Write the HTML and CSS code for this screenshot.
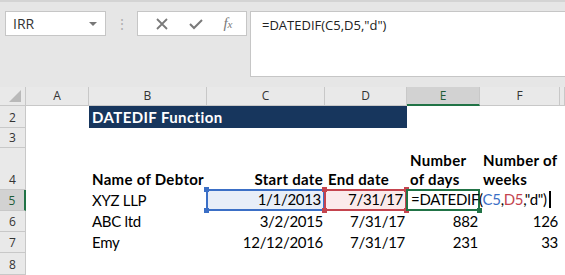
FILE: index.html
```html
<!DOCTYPE html>
<html lang="en">
<head>
  <meta charset="UTF-8" />
  <title>DATEDIF Function</title>
  <link rel="stylesheet" href="styles.css">
</head>
<body>
  <!-- formula bar -->
  <div class="toolbar">
    <div class="namebox">
      <span>IRR</span>
      <span class="caret"></span>
    </div>
    <div class="grip">⋮</div>
    <div class="fbtns">
      <svg width="14" height="14" viewBox="0 0 14 14"><path d="M2 2 L12 12 M12 2 L2 12" stroke="#7a7a7a" stroke-width="1.8" fill="none"/></svg>
      <svg width="16" height="14" viewBox="0 0 16 14"><path d="M2 7 L6 11 L14 3" stroke="#7a7a7a" stroke-width="2" fill="none"/></svg>
      <span class="fx">f<small>x</small></span>
    </div>
    <div class="finput">=DATEDIF(C5,D5,"d")</div>
  </div>

  <!-- sheet -->
  <div class="sheet">
    <div class="hd corner"><span class="tri"></span></div>
    <div class="hd">A</div>
    <div class="hd">B</div>
    <div class="hd">C</div>
    <div class="hd">D</div>
    <div class="hd sel-col">E</div>
    <div class="hd">F</div>
    <div class="hd"></div>

    <div class="rh">2</div>
    <div class="c"></div>
    <div class="c title">DATEDIF Function</div>
    <div class="c"></div>
    <div class="c"></div>
    <div class="c"></div>

    <div class="rh">3</div>
    <div class="c"></div><div class="c"></div><div class="c"></div><div class="c"></div><div class="c"></div><div class="c"></div><div class="c"></div>

    <div class="rh">4</div>
    <div class="c"></div>
    <div class="c b">Name of Debtor</div>
    <div class="c b r">Start date</div>
    <div class="c b">End date</div>
    <div class="c b wrap">Number<br>of days</div>
    <div class="c b wrap">Number of<br>weeks</div>
    <div class="c"></div>

    <div class="rh sel-row">5</div>
    <div class="c"></div>
    <div class="c">XYZ LLP</div>
    <div class="c r ref blue">1/1/2013<i class="h tl"></i><i class="h bl"></i><i class="h tr"></i><i class="h br"></i></div>
    <div class="c r ref red">7/31/17<i class="h tl"></i><i class="h bl"></i><i class="h tr"></i><i class="h br"></i></div>
    <div class="c ref green"><span class="edit">=DATEDIF(<em class="cb">C5</em>,<em class="cr">D5</em>,"d")<b class="cursor"></b></span><i class="h br"></i></div>
    <div class="c"></div>
    <div class="c"></div>

    <div class="rh">6</div>
    <div class="c"></div>
    <div class="c">ABC ltd</div>
    <div class="c r">3/2/2015</div>
    <div class="c r">7/31/17</div>
    <div class="c r">882</div>
    <div class="c r">126</div>
    <div class="c"></div>

    <div class="rh">7</div>
    <div class="c"></div>
    <div class="c">Emy</div>
    <div class="c r">12/12/2016</div>
    <div class="c r">7/31/17</div>
    <div class="c r">231</div>
    <div class="c r">33</div>
    <div class="c"></div>

    <div class="rh">8</div>
    <div class="c"></div><div class="c"></div><div class="c"></div><div class="c"></div><div class="c"></div><div class="c"></div><div class="c"></div>
  </div>
</body>
</html>
```

FILE: styles.css
```css
body {
  margin: 0;
  padding: 0;
  background: #e6e6e6;
  font-family: Lato, "Liberation Sans", sans-serif;
  width: 565px;
  height: 275px;
  overflow: hidden;
}

/* FORMULA BAR */
.toolbar {
  height: 87px;
  box-sizing: border-box;
  border-top: 2px solid #d4d4d4;
  padding: 9px 0 0 5px;
  display: flex;
  align-items: flex-start;
}
.namebox {
  width: 101px;
  height: 25px;
  box-sizing: border-box;
  background: #fff;
  border: 1px solid #c6c6c6;
  display: flex;
  align-items: center;
  justify-content: space-between;
  padding: 0 8px 0 7px;
  font-family: "Open Sans", sans-serif;
  font-size: 14px;
  color: #333;
}
.caret {
  width: 0;
  height: 0;
  border-left: 4px solid transparent;
  border-right: 4px solid transparent;
  border-top: 4px solid #777;
}
.grip {
  width: 31px;
  text-align: center;
  color: #b0b0b0;
  font-size: 14px;
  line-height: 25px;
}
.fbtns {
  width: 110px;
  height: 25px;
  box-sizing: border-box;
  background: #fff;
  border: 1px solid #c6c6c6;
  display: flex;
  align-items: center;
  justify-content: space-around;
  padding: 0 4px 0 8px;
}
.fx {
  font-family: "Liberation Serif", serif;
  font-style: italic;
  font-size: 15px;
  color: #7a7a7a;
}
.fx small {
  font-size: 11px;
}
.finput {
  margin-left: 3px;
  flex: 1;
  height: 66px;
  box-sizing: border-box;
  background: #fff;
  border: 1px solid #c6c6c6;
  border-right: none;
  padding: 4px 0 0 11px;
  font-family: "Open Sans", sans-serif;
  font-size: 13px;
  color: #222;
}

/* SHEET */
.sheet {
  display: grid;
  grid-template-columns: 26px 63px 118px 118px 82px 73px 80px 5px;
  grid-template-rows: 19px 22px 20px 42px 21px 21px 21px 22px;
  background: #fff;
}
.hd {
  background: #e9e9e9;
  border-right: 1px solid #c8c8c8;
  border-bottom: 1px solid #c8c8c8;
  box-sizing: border-box;
  text-align: center;
  font-family: "Open Sans", sans-serif;
  font-size: 12px;
  line-height: 18px;
  color: #333;
}
.corner {
  position: relative;
}
.tri {
  position: absolute;
  right: 4px;
  bottom: 3px;
  width: 0;
  height: 0;
  border-left: 12px solid transparent;
  border-bottom: 12px solid #b9b9b9;
}
.sel-col {
  background: #d2d2d2;
  border-bottom: 2px solid #217346;
  color: #1e5c38;
}
.rh {
  background: #e9e9e9;
  border-right: 1px solid #c8c8c8;
  border-bottom: 1px solid #c8c8c8;
  box-sizing: border-box;
  font-family: "Open Sans", sans-serif;
  font-size: 12px;
  color: #333;
  display: flex;
  align-items: flex-end;
  justify-content: center;
  padding-bottom: 1px;
}
.sel-row {
  background: #d2d2d2;
  border-right: 2px solid #217346;
  color: #1e5c38;
}
.c {
  position: relative;
  box-sizing: border-box;
  padding: 0 2px 1px 3px;
  font-size: 15px;
  line-height: 19px;
  letter-spacing: -0.3px;
  color: #000;
  display: flex;
  align-items: flex-end;
  white-space: nowrap;
}
.b {
  font-weight: bold;
  letter-spacing: 0.3px;
}
.r {
  justify-content: flex-end;
}
.wrap {
  white-space: normal;
}
.title {
  grid-column: span 3;
  background: #17365d;
  color: #fff;
  font-weight: bold;
  letter-spacing: 0.4px;
}

/* REFERENCE HIGHLIGHTS */
.ref {
  border: 2px solid;
  margin: -1px 0 0 -1px;
  padding-bottom: 0;
}
.blue {
  border-color: #3b6fc6;
  background: #e8eef8;
}
.red {
  border-color: #c4444e;
  background: #fbeaeb;
}
.green {
  border-color: #217346;
  background: #fff;
  overflow: visible;
  z-index: 2;
}
.edit {
  position: relative;
}
.edit em {
  font-style: normal;
}
.cb {
  color: #3b6fc6;
}
.cr {
  color: #c4444e;
}
.cursor {
  display: inline-block;
  width: 2px;
  height: 17px;
  background: #000;
  margin-left: 2px;
  vertical-align: -3px;
}
.h {
  position: absolute;
  width: 5px;
  height: 5px;
}
.blue .h { background: #3b6fc6; }
.red .h { background: #c4444e; }
.green .h { background: #217346; }
.tl { left: -4px; top: -4px; }
.tr { right: -4px; top: -4px; }
.bl { left: -4px; bottom: -4px; }
.br { right: -4px; bottom: -4px; }
```
